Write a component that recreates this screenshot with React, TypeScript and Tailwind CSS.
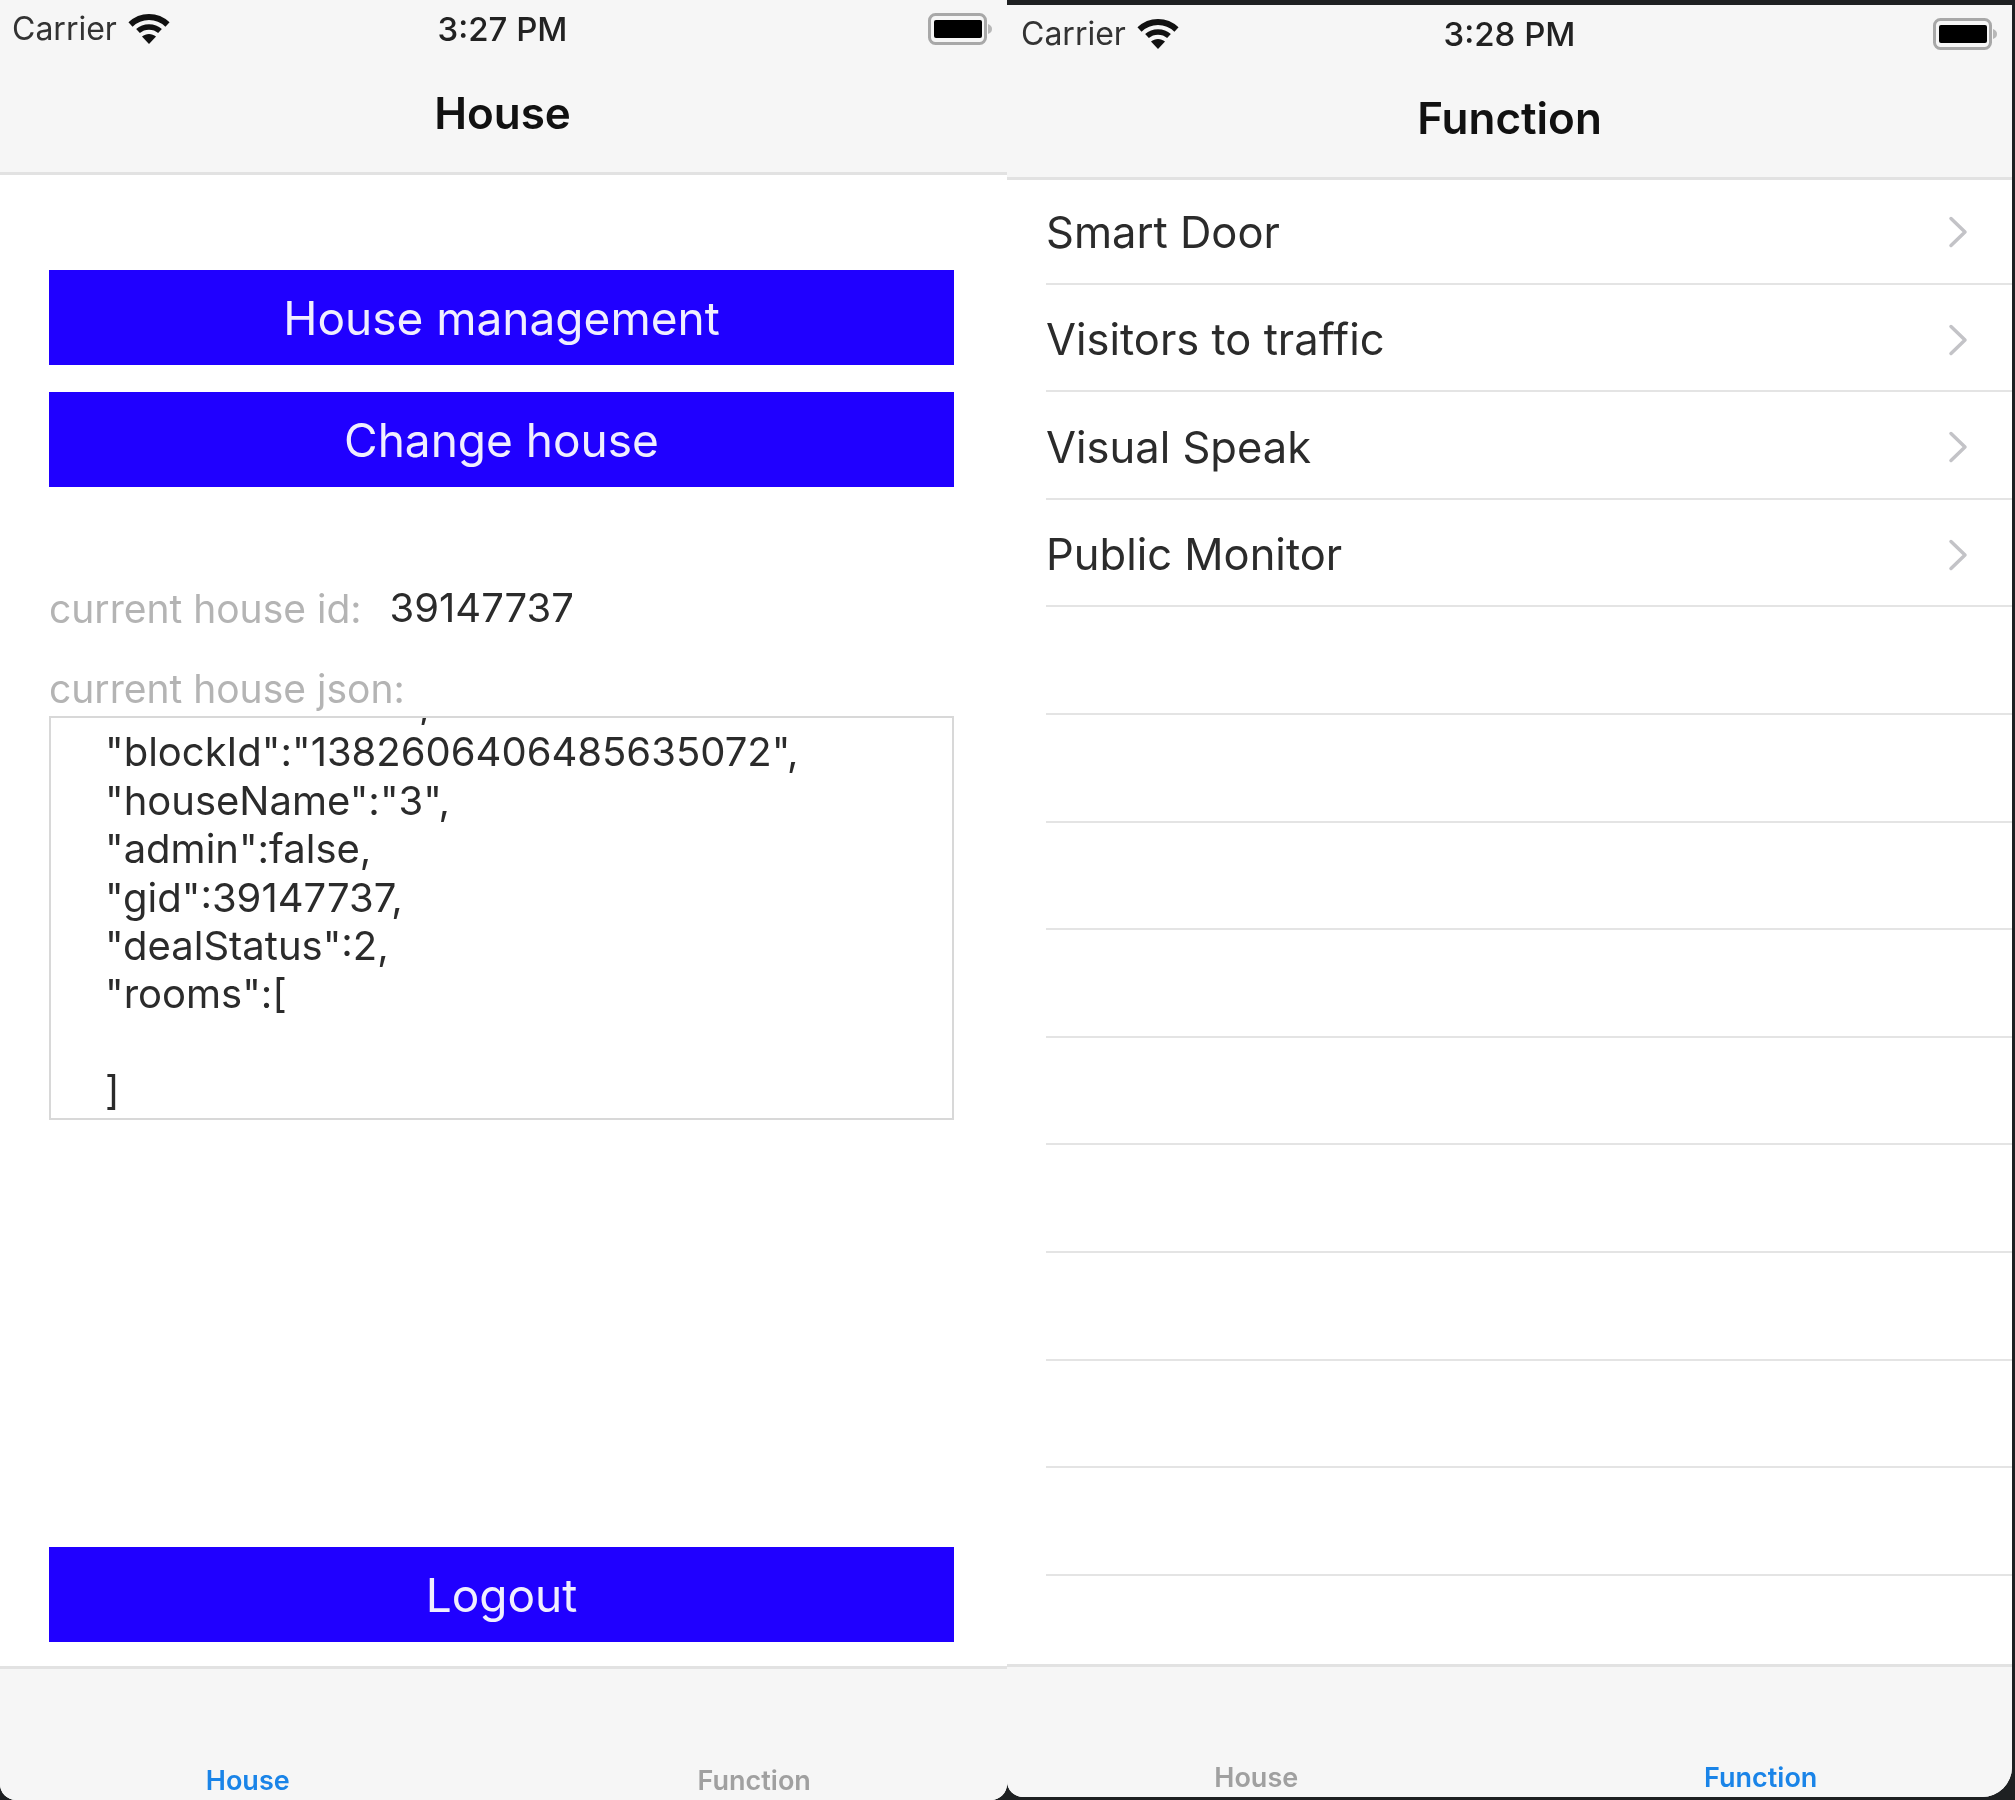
const FONT = 'font-["Inter","Liberation_Sans",sans-serif]';

const jsonLines = ['"blockId":"1382606406485635072",', '"houseName":"3",', '"admin":false,', '"gid":39147737,', '"dealStatus":2,', '"rooms":[', ' ', ']'];
const functionRows = ['Smart Door', 'Visitors to traffic', 'Visual Speak', 'Public Monitor', '', '', '', '', '', '', '', '', ''];

function WifiIcon() {
  return (
    <svg width="42" height="30" viewBox="0 0 42 30" fill="none" stroke="#111" strokeLinecap="butt">
      <path d="M2.5 10.5C13 0.5 29 0.5 39.5 10.5" strokeWidth="6" />
      <path d="M10 17C16 11.5 26 11.5 32 17" strokeWidth="5.5" />
      <path d="M21 30L14 22.5C18 19 24 19 28 22.5Z" fill="#111" stroke="none" />
    </svg>
  );
}

function BatteryIcon() {
  return (
    <svg width="65" height="32" viewBox="0 0 65 32">
      <rect x="1.5" y="1.5" width="56" height="29" rx="6" fill="none" stroke="#a8a8a8" strokeWidth="3" />
      <rect x="6" y="7" width="48" height="18" rx="2" fill="#000" />
      <path d="M60 11c3 1 4 3 4 5s-1 4-4 5z" fill="#b8b8b8" />
    </svg>
  );
}

function Chevron() {
  return (
    <svg width="20" height="32" viewBox="0 0 20 32" fill="none" stroke="#c3c3c7" strokeWidth="3.5" strokeLinecap="round" strokeLinejoin="round">
      <path d="M3 2.5L17 16L3 29.5" />
    </svg>
  );
}

function Header({ time, title, className }: { time: string; title: string; className: string }) {
  return (
    <div className={`shrink-0 border-b-[3px] border-[#e2e2e2] bg-[#f6f6f6] ${className}`}>
      <div className="grid h-[58px] grid-cols-[1fr_auto_1fr] items-center">
        <div className="flex items-center gap-[11px]">
          <span className="text-[32px] leading-none text-[#333]">Carrier</span>
          <WifiIcon />
        </div>
        <span className="text-[33px] leading-none font-medium text-[#222]">{time}</span>
        <div className="flex justify-end">
          <BatteryIcon />
        </div>
      </div>
      <div className="flex h-full max-h-[114px] items-center justify-center pb-[5px] text-[44px] leading-none font-semibold text-[#111]">{title}</div>
    </div>
  );
}

function TabBar({ active, height, labelClasses }: { active: string; height: string; labelClasses: string[] }) {
  return (
    <div className={`grid shrink-0 grid-cols-2 border-t-[3px] border-[#e2e2e2] bg-[#f6f6f6] ${height}`}>
      {['House', 'Function'].map((t, i) => (
        <div key={t} className={`flex items-end justify-center text-[27px] leading-none font-semibold ${labelClasses[i]} ${t === active ? 'text-[#1a84e8]' : 'text-[#a0a0a0]'}`}>
          {t}
        </div>
      ))}
    </div>
  );
}

function BlueButton({ label, className }: { label: string; className?: string }) {
  return (
    <button className={`flex h-[95px] w-full items-center justify-center bg-[#2000ff] text-[46px] leading-none text-[#f0eeff] ${className ?? ''}`}>
      {label}
    </button>
  );
}

export default function App() {
  return (
    <div className={`flex h-[1800px] w-[2015px] overflow-hidden bg-[#1e2022] blur-[0.7px] ${FONT}`}>
      {/* House */}
      <div className="flex h-full w-[1007px] flex-col overflow-hidden rounded-b-[16px] bg-white">
        <div className="flex h-[175px] shrink-0 flex-col">
          <Header time="3:27 PM" title="House" className="h-full pr-[14px] pl-[12px]" />
        </div>
        <div className="flex min-h-0 flex-1 flex-col pt-[95px] pr-[53px] pb-[24px] pl-[49px]">
          <div className="flex flex-col gap-[27px]">
            <BlueButton label="House management" />
            <BlueButton label="Change house" />
          </div>
          <div className="mt-[96px] flex h-[50px] items-center text-[39px] leading-none">
            <span className="text-[#b4b4b4]">current house id:</span>
            <span className="ml-[28px] text-[40px] text-[#2b2b2b]">39147737</span>
          </div>
          <div className="mt-[31px] h-[50px] text-[39px] leading-[50px] text-[#b4b4b4]">current house json:</div>
          <div className="mt-[2px] h-[404px] overflow-hidden border-[2px] border-[#d8d8d8] pl-[54px] text-[40px] leading-[48.4px] text-[#2b2b2b]">
            <div className="-mt-[38px] pl-[314px]">,</div>
            {jsonLines.map((line, i) => (
              <div key={i} className="whitespace-pre">{line}</div>
            ))}
          </div>
          <BlueButton label="Logout" className="mt-auto" />
        </div>
        <TabBar active="House" height="h-[134px]" labelClasses={['pb-[6px] pr-[8px]', 'pb-[6px] pr-[2px]']} />
      </div>

      {/* Function */}
      <div className="mt-[5px] mb-[3px] flex w-[1005px] flex-col overflow-hidden rounded-bl-[16px] rounded-br-[30px] bg-white">
        <div className="flex h-[175px] shrink-0 flex-col">
          <Header time="3:28 PM" title="Function" className="h-full pr-[14px] pl-[14px]" />
        </div>
        <div className="min-h-0 flex-1 overflow-hidden">
          <div className="-mt-[3px]">
            {functionRows.map((row, i) => (
              <div key={i} className="ml-[39px] flex h-[107.6px] items-center justify-between border-b-[2px] border-[#e4e4e4] pt-[5px] pr-[44px] text-[43.5px] leading-none text-[#2b2b2b]">
                <span>{row}</span>
                {row && <Chevron />}
              </div>
            ))}
          </div>
        </div>
        <TabBar active="Function" height="h-[133px]" labelClasses={['pb-[6px] pr-[4px]', 'pb-[6px]']} />
      </div>
    </div>
  );
}
